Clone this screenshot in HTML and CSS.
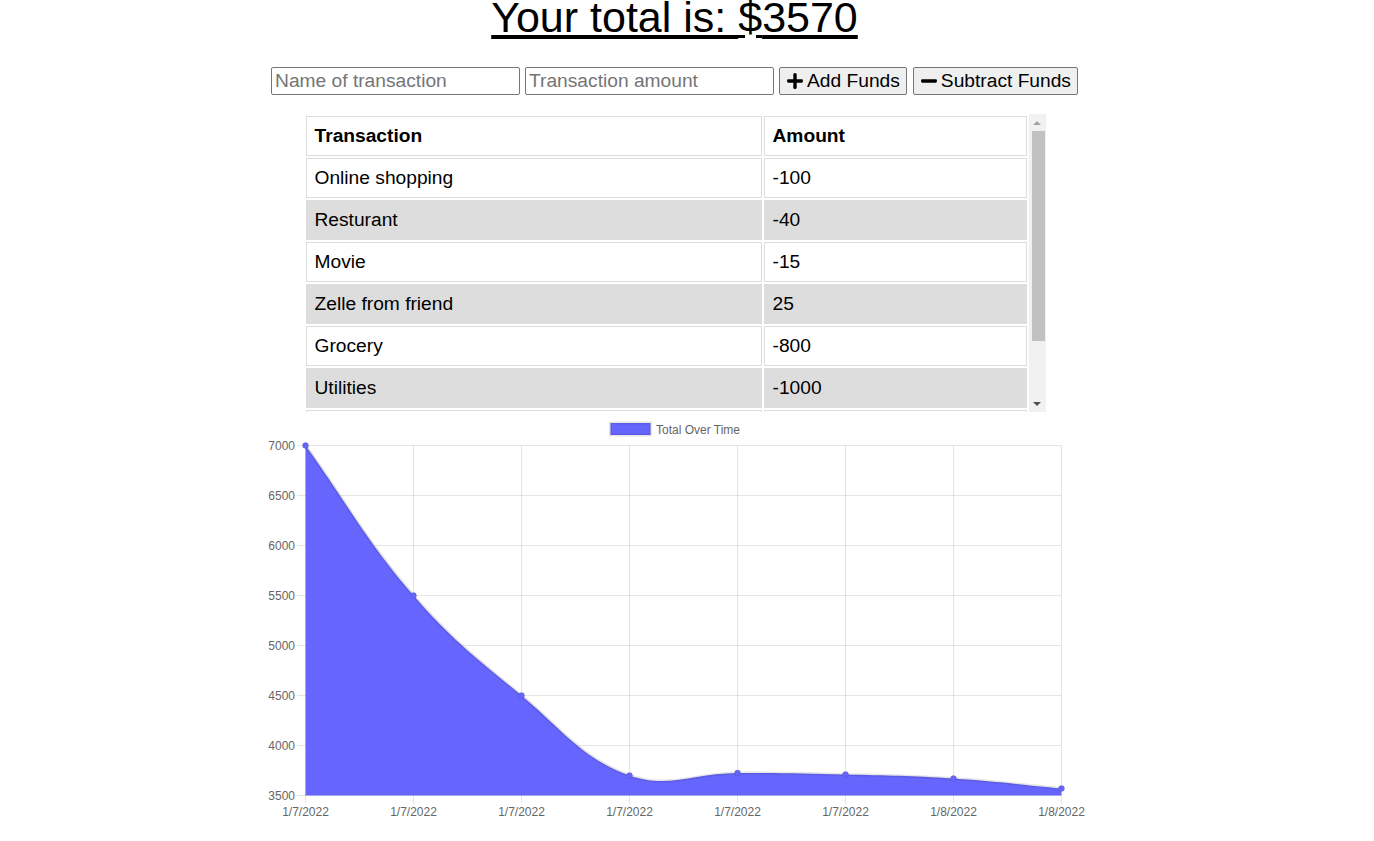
FILE: index.html
```html
<!DOCTYPE html>
<html lang="en">
<head>
<meta charset="utf-8">
<title>Budget Tracker</title>
<link rel="stylesheet" href="styles.css">
</head>
<body>
<div class="page">
  <h1 class="total">Your total is: <span class="dollar">$</span>3570</h1>

  <div class="form">
    <input type="text" class="field" placeholder="Name of transaction">
    <input type="text" class="field" placeholder="Transaction amount">
    <button class="btn btn-add"><svg class="ico" viewBox="0 0 448 512" width="16" height="18"><path d="M416 208H272V64c0-17.670-14.330-32-32-32h-32c-17.670 0-32 14.330-32 32v144H32c-17.670 0-32 14.330-32 32v32c0 17.670 14.330 32 32 32h144v144c0 17.670 14.330 32 32 32h32c17.670 0 32-14.330 32-32V304h144c17.670 0 32-14.330 32-32v-32c0-17.670-14.330-32-32-32z"/></svg> Add Funds</button>
    <button class="btn btn-sub"><svg class="ico" viewBox="0 0 448 512" width="16" height="18"><path d="M416 208H32c-17.670 0-32 14.330-32 32v32c0 17.670 14.330 32 32 32h384c17.670 0 32-14.330 32-32v-32c0-17.670-14.330-32-32-32z"/></svg> Subtract Funds</button>
  </div>

  <div class="table-box">
    <div class="table-view">
      <table class="tx">
        <colgroup><col class="col-name"><col class="col-amt"></colgroup>
        <thead>
          <tr><th>Transaction</th><th>Amount</th></tr>
        </thead>
        <tbody>
          <tr><td>Online shopping</td><td>-100</td></tr>
          <tr><td>Resturant</td><td>-40</td></tr>
          <tr><td>Movie</td><td>-15</td></tr>
          <tr><td>Zelle from friend</td><td>25</td></tr>
          <tr><td>Grocery</td><td>-800</td></tr>
          <tr><td>Utilities</td><td>-1000</td></tr>
          <tr><td>Rent</td><td>-1500</td></tr>
          <tr><td>Paycheck</td><td>7000</td></tr>
        </tbody>
      </table>
    </div>
    <div class="vscroll">
      <div class="sb-btn"><span class="arrow-up"></span></div>
      <div class="sb-track"><div class="sb-thumb"></div></div>
      <div class="sb-btn"><span class="arrow-down"></span></div>
    </div>
  </div>

  <svg class="chart" width="830" height="410" viewBox="260 415 830 410">
    <g class="legend">
      <rect x="610.5" y="423" width="40" height="12" class="legend-box"/>
      <text x="656" y="433.5" class="lbl">Total Over Time</text>
    </g>
    <g class="grid">
      <line x1="297" y1="445.5" x2="1061.5" y2="445.5"/>
      <line x1="297" y1="495.5" x2="1061.5" y2="495.5"/>
      <line x1="297" y1="545.5" x2="1061.5" y2="545.5"/>
      <line x1="297" y1="595.5" x2="1061.5" y2="595.5"/>
      <line x1="297" y1="645.5" x2="1061.5" y2="645.5"/>
      <line x1="297" y1="695.5" x2="1061.5" y2="695.5"/>
      <line x1="297" y1="745.5" x2="1061.5" y2="745.5"/>
      <line x1="297" y1="795.5" x2="1061.5" y2="795.5"/>
      <line x1="305.5" y1="445.5" x2="305.5" y2="803.5"/>
      <line x1="413.5" y1="445.5" x2="413.5" y2="803.5"/>
      <line x1="521.5" y1="445.5" x2="521.5" y2="803.5"/>
      <line x1="629.5" y1="445.5" x2="629.5" y2="803.5"/>
      <line x1="737.5" y1="445.5" x2="737.5" y2="803.5"/>
      <line x1="845.5" y1="445.5" x2="845.5" y2="803.5"/>
      <line x1="953.5" y1="445.5" x2="953.5" y2="803.5"/>
      <line x1="1061.5" y1="445.5" x2="1061.5" y2="803.5"/>
    </g>
    <g class="ylabels">
      <text x="295" y="449.5">7000</text>
      <text x="295" y="499.5">6500</text>
      <text x="295" y="549.5">6000</text>
      <text x="295" y="599.5">5500</text>
      <text x="295" y="649.5">5000</text>
      <text x="295" y="699.5">4500</text>
      <text x="295" y="749.5">4000</text>
      <text x="295" y="799.5">3500</text>
    </g>
    <g class="xlabels">
      <text x="305.5" y="816">1/7/2022</text>
      <text x="413.5" y="816">1/7/2022</text>
      <text x="521.5" y="816">1/7/2022</text>
      <text x="629.5" y="816">1/7/2022</text>
      <text x="737.5" y="816">1/7/2022</text>
      <text x="845.5" y="816">1/7/2022</text>
      <text x="953.5" y="816">1/8/2022</text>
      <text x="1061.5" y="816">1/8/2022</text>
    </g>
    <path class="area" d="M305.5,445.5 C348.7,505.5 365.4,539.85 413.5,595.5 C451.8,639.85 476.3,657.9 521.5,695.5 C562.7,729.9 581.6,758.3 629.5,775.5 C668,789.3 694.3,773.2 737.5,773 C780.7,772.8 802.3,773.4 845.5,774.5 C888.7,775.6 910.4,775.7 953.5,778.5 C996.8,781.3 1018.3,784.5 1061.5,788.5 L1061.5,795.5 L305.5,795.5 Z"/>
    <path class="line" d="M305.5,445.5 C348.7,505.5 365.4,539.85 413.5,595.5 C451.8,639.85 476.3,657.9 521.5,695.5 C562.7,729.9 581.6,758.3 629.5,775.5 C668,789.3 694.3,773.2 737.5,773 C780.7,772.8 802.3,773.4 845.5,774.5 C888.7,775.6 910.4,775.7 953.5,778.5 C996.8,781.3 1018.3,784.5 1061.5,788.5"/>
    <g class="pts">
      <circle cx="305.5" cy="445.5" r="3"/>
      <circle cx="413.5" cy="595.5" r="3"/>
      <circle cx="521.5" cy="695.5" r="3"/>
      <circle cx="629.5" cy="775.5" r="3"/>
      <circle cx="737.5" cy="773" r="3"/>
      <circle cx="845.5" cy="774.5" r="3"/>
      <circle cx="953.5" cy="778.5" r="3"/>
      <circle cx="1061.5" cy="788.5" r="3"/>
    </g>
  </svg>
</div>
</body>
</html>
```

FILE: styles.css
```css
html, body {
  margin: 0;
  padding: 0;
  background: #ffffff;
}

body {
  font-family: "Liberation Sans", Arial, Helvetica, sans-serif;
  color: #000000;
}

.page {
  width: 1349px;
  display: flex;
  flex-direction: column;
  align-items: center;
}

.total {
  margin: 0;
  height: 34px;
  font-size: 43px;
  font-weight: normal;
  line-height: 34px;
  white-space: pre;
  text-decoration: underline;
}

/* the "$" breaks the underline around its stem, as skip-ink does in the original */
.total .dollar {
  display: inline-block;
  padding-bottom: 4px;
  background-image: linear-gradient(#000, #000), linear-gradient(#000, #000);
  background-repeat: no-repeat;
  background-size: 7px 3px, 6px 3px;
  background-position: 0 35px, 18px 35px;
}

.form {
  margin-top: 33px;
  display: flex;
  align-items: center;
  gap: 5px;
}

.field {
  box-sizing: border-box;
  width: 249px;
  height: 28px;
  margin: 0;
  padding: 1px 3px;
  border: 1px solid #767676;
  border-radius: 2px;
  font-family: "Liberation Sans", Arial, sans-serif;
  font-size: 19.2px;
  color: #000;
  background: #fff;
}

.field::placeholder {
  color: #757575;
}

.btn {
  box-sizing: border-box;
  height: 28px;
  margin: 0;
  padding: 0 6px 0 7px;
  border: 1px solid #767676;
  border-radius: 2px;
  background: #efefef;
  color: #000;
  font-family: "Liberation Sans", Arial, sans-serif;
  font-size: 19.2px;
  line-height: 24px;
  white-space: nowrap;
  display: flex;
  align-items: center;
  gap: 4px;
}

.btn-sub {
  margin-left: 1px;
}

.ico {
  display: block;
  fill: #000;
}

.table-box {
  margin-top: 19px;
  width: 742px;
  height: 298px;
  display: flex;
}

.table-view {
  width: 725px;
  height: 298px;
  overflow: hidden;
}

.vscroll {
  width: 17px;
  height: 298px;
  background: #f1f1f1;
  display: flex;
  flex-direction: column;
}

.sb-btn {
  height: 17px;
  flex: none;
  display: flex;
  align-items: center;
  justify-content: center;
}

.arrow-up {
  width: 0;
  height: 0;
  border-left: 4px solid transparent;
  border-right: 4px solid transparent;
  border-bottom: 4px solid #a3a3a3;
}

.arrow-down {
  width: 0;
  height: 0;
  border-left: 4px solid transparent;
  border-right: 4px solid transparent;
  border-top: 4px solid #505050;
}

.sb-track {
  flex: 1;
}

.sb-thumb {
  height: 210px;
  margin: 0 1px 0 3px;
  background: #c1c1c1;
}

.tx {
  width: 100%;
  table-layout: fixed;
  border-collapse: separate;
  border-spacing: 2px;
  font-size: 19.2px;
}

.col-name {
  width: 456px;
}

.tx th,
.tx td {
  border: 1px solid #dddddd;
  padding: 8px 8px;
  line-height: 22px;
  text-align: left;
  white-space: nowrap;
}

.tx th {
  font-weight: bold;
}

.tx tbody tr:nth-child(even) td {
  background: #dddddd;
}

.chart {
  display: block;
  margin-top: 3px;
}

.chart text {
  font-family: "Liberation Sans", Arial, Helvetica, sans-serif;
  font-size: 12px;
  fill: #666666;
}

.chart .ylabels text {
  text-anchor: end;
}

.chart .xlabels text {
  text-anchor: middle;
}

.grid line {
  stroke: rgba(0, 0, 0, 0.1);
  stroke-width: 1;
}

.legend-box {
  fill: #6666ff;
  stroke: rgba(0, 0, 0, 0.1);
  stroke-width: 3;
}

.area {
  fill: #6666ff;
}

.line {
  fill: none;
  stroke: rgba(0, 0, 0, 0.1);
  stroke-width: 3;
}

.pts circle {
  fill: #6666ff;
  stroke: rgba(0, 0, 0, 0.1);
  stroke-width: 1;
}
```
